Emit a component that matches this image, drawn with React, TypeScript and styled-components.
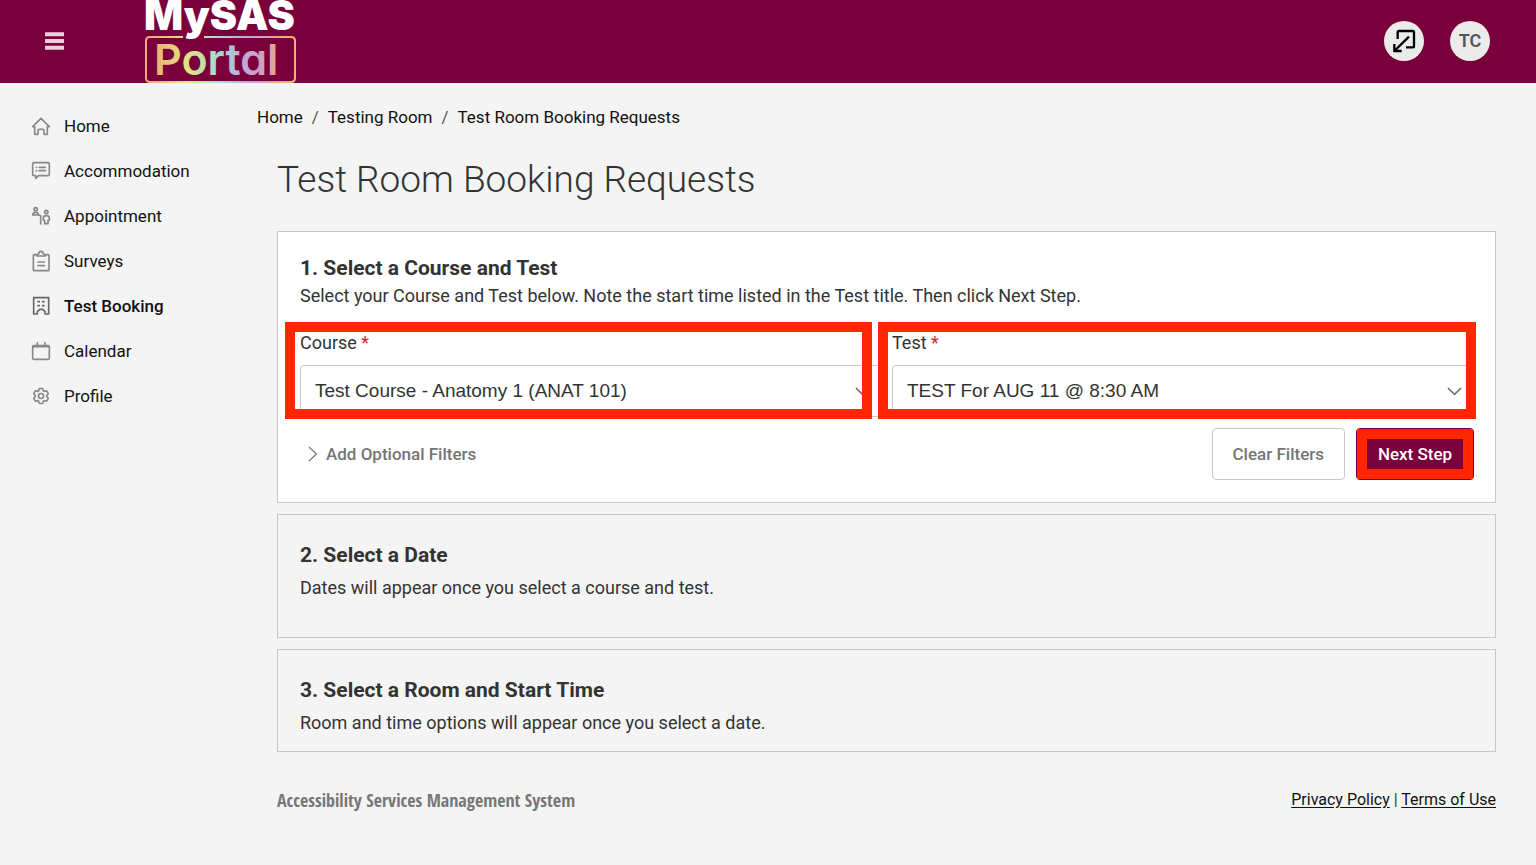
import React from 'react';
import styled, { createGlobalStyle } from 'styled-components';
import { HiOutlineCog6Tooth } from 'react-icons/hi2';

const GlobalStyle = createGlobalStyle`
  *, *::before, *::after { box-sizing: border-box; }
  body {
    margin: 0;
    background: #f4f4f4;
    color: #333;
    font-family: Roboto, "Liberation Sans", sans-serif;
    font-size: 17px;
    line-height: 24px;
  }
  h1, h2, p, ul, ol { margin: 0; padding: 0; }
  ul, ol { list-style: none; }
  button, select { font: inherit; cursor: pointer; }
`;

const Header = styled.header`
  display: flex;
  align-items: center;
  height: 83px;
  padding: 0 46px 0 45px;
  border-bottom: 1px solid #7a003c;
  background: #7a003c;
`;

const MenuButton = styled.button`
  display: flex;
  padding: 0;
  border: 0;
  background: none;
  margin-right: 80px;
`;

const LogoLink = styled.a`
  display: block;
  align-self: flex-start;
  height: 83px;
`;

const HeaderActions = styled.div`
  display: flex;
  gap: 26px;
  margin-left: auto;
`;

const RoundButton = styled.button`
  display: flex;
  align-items: center;
  justify-content: center;
  width: 40px;
  height: 40px;
  padding: 0;
  border: 0;
  border-radius: 50%;
  background: #ebebeb;
  color: #555;
  font-size: 18px;
  font-weight: 600;
`;

const Body = styled.div`
  display: flex;
`;

const Sidebar = styled.nav`
  flex: 0 0 257px;
  padding: 20px 0 0 31px;
`;

const NavLink = styled.a<{ $active?: boolean }>`
  display: flex;
  align-items: center;
  gap: 13px;
  height: 45px;
  color: #111;
  text-decoration: none;
  font-weight: ${(p) => (p.$active ? 500 : 400)};
  svg { color: ${(p) => (p.$active ? '#666' : '#888')}; flex: none; }
`;

const Main = styled.main`
  flex: 1;
  min-width: 0;
  padding: 22px 40px 40px 0;
`;

const Crumbs = styled.ol`
  display: flex;
  li + li::before { content: "/"; margin: 0 9px; color: #555; }
  a { color: #111; text-decoration: none; }
`;

const Content = styled.div`
  padding-left: 20px;
`;

const PageTitle = styled.h1`
  margin: 27px 0;
  font-size: 37px;
  line-height: 48px;
  font-weight: 300;
`;

const Steps = styled.div`
  display: flex;
  flex-direction: column;
  gap: 11px;
`;

const Card = styled.section<{ $open?: boolean; $bottom: number }>`
  padding: ${(p) => (p.$open ? 24 : 28)}px 21px ${(p) => p.$bottom}px 22px;
  border: 1px solid #c8c8c8;
  background: ${(p) => (p.$open ? '#fff' : 'transparent')};
  h2 { font-size: 21px; line-height: 24px; font-weight: 700; }
  p { font-size: 18px; }
  h2 + p { margin-top: ${(p) => (p.$open ? 4 : 9)}px; }
`;

const Fields = styled.div`
  display: grid;
  grid-template-columns: 1fr 1fr;
  gap: 10px;
  margin-top: 23px;
`;

const Field = styled.div`
  position: relative;
  min-width: 0;
  label { display: block; font-size: 18px; }
  label span { color: #c9302c; }
`;

const SelectWrap = styled.div`
  position: relative;
  margin-top: 10px;
  svg { position: absolute; right: 12px; top: 22px; pointer-events: none; }
`;

const Select = styled.select`
  display: block;
  appearance: none;
  width: 100%;
  height: 52px;
  padding: 0 40px 0 14px;
  border: 1px solid #c8c8c8;
  border-radius: 4px;
  background: #fff;
  color: #333;
  font-family: "Liberation Sans", Arial, sans-serif;
  font-size: 19px;
`;

const Highlight = styled.span<{ $left?: number; $right?: number; $top?: number; $bottom?: number }>`
  position: absolute;
  left: ${(p) => p.$left ?? 0}px;
  right: ${(p) => p.$right ?? 0}px;
  top: ${(p) => p.$top ?? 0}px;
  bottom: ${(p) => p.$bottom ?? 0}px;
  border: 10px solid #ff2600;
  pointer-events: none;
`;

const Actions = styled.div`
  display: flex;
  align-items: center;
  gap: 11px;
  margin-top: 11px;
`;

const FilterToggle = styled.button`
  display: flex;
  align-items: center;
  gap: 8px;
  margin-right: auto;
  padding: 0 0 0 8px;
  border: 0;
  background: none;
  color: #757575;
  font-weight: 500;
`;

const ActionButton = styled.button<{ $primary?: boolean }>`
  position: relative;
  min-width: 118px;
  height: 52px;
  padding: 0 20px;
  border: 1px solid ${(p) => (p.$primary ? '#7a003c' : '#c8c8c8')};
  border-radius: 4px;
  background: ${(p) => (p.$primary ? '#7a003c' : '#fff')};
  color: ${(p) => (p.$primary ? '#fff' : '#757575')};
  font-weight: 500;
`;

const Footer = styled.footer`
  display: flex;
  align-items: center;
  justify-content: space-between;
  margin-top: 36px;
  color: #333;
  font-size: 16px;
  a { color: #111; text-underline-offset: 2px; }
`;

const SystemName = styled.span`
  color: #777;
  font-family: "Liberation Sans Narrow", "Arial Narrow", "Open Sans Condensed", sans-serif;
  font-size: 18px;
`;

const Line = ({ children }: { children: React.ReactNode }) => (
  <svg width="20" height="20" viewBox="0 0 60 60" fill="none" stroke="currentColor" strokeWidth="5"
    strokeLinejoin="round" strokeLinecap="round" overflow="visible" aria-hidden="true">
    {children}
  </svg>
);

const HomeIcon = () => (
  <Line><path d="M30 7 5 32h6v23h10V43q0-3 3-3h12q3 0 3 3v12h10V32h6Z" /></Line>
);
const CommentIcon = () => (
  <Line>
    <path d="M9 5h42q4 0 4 4v31q0 4-4 4H23l-9 8v-8H9q-4 0-4-4V9q0-4 4-4Z" />
    <path d="M16 19h1M16 29h1M25 19h18M25 29h18" />
  </Line>
);
const PeopleIcon = () => (
  <Line>
    <circle cx="14" cy="10" r="5" />
    <path d="M5 27q0-8 9-8 7 0 9 8ZM23 27l6 2v25" />
    <circle cx="46" cy="18" r="5" />
    <path d="M41 53V43h-4v-7q0-7 9-7t9 7v7h-4v10Z" />
  </Line>
);
const ClipboardIcon = () => (
  <Line>
    <path d="M17 11h-7q-3 0-3 3v42q0 3 3 3h41q3 0 3-3V14q0-3-3-3h-7" />
    <path d="M17 15q0-6 6-6 1-8 7-8t7 8q6 0 6 6Z" />
    <path d="M21 33h19M21 44h19" />
  </Line>
);
const BuildingIcon = () => (
  <Line>
    <path d="M8 5h45v49H42v-7l-7-7h-9l-7 7v7H8Z" />
    <path d="M21 17h4M35 17h4M21 29h4M35 29h4" />
  </Line>
);
const CalendarIcon = () => (
  <Line>
    <path d="M8 14h44q3 0 3 3v35q0 3-3 3H8q-3 0-3-3V17q0-3 3-3ZM19 5v9M42 5v9" />
    <path d="M7 17h46" />
  </Line>
);

const ChevronDown = () => (
  <svg width="15" height="9" viewBox="0 0 15 9" fill="none" stroke="#666" strokeWidth="1.5" aria-hidden="true">
    <path d="M1 1l6.5 6.5L14 1" />
  </svg>
);

const Logo = () => (
  <svg width="152" height="83" viewBox="0 0 152 83" overflow="visible" aria-hidden="true">
    <defs>
      <linearGradient id="pastel" gradientUnits="userSpaceOnUse" x1="0" y1="0" x2="152" y2="0">
        <stop offset="0.04" stopColor="#f0aa74" />
        <stop offset="0.28" stopColor="#dfe680" />
        <stop offset="0.48" stopColor="#a0dcd4" />
        <stop offset="0.66" stopColor="#c0a8d8" />
        <stop offset="0.78" stopColor="#d0a0c0" />
        <stop offset="0.88" stopColor="#eca884" />
        <stop offset="1" stopColor="#eebb60" />
      </linearGradient>
    </defs>
    <path d="M38 37H5q-4 0-4 4v37q0 4 4 4h141q4 0 4-4V41q0-4-4-4H59" fill="none" stroke="url(#pastel)" strokeWidth="2" />
    <text x="-1" y="30" fill="#fff" fontFamily="Inter, sans-serif" fontWeight="900" fontSize="41">MySAS</text>
    <text x="9" y="75" fill="url(#pastel)" fontFamily="Inter, sans-serif" fontWeight="600" fontSize="43"
      style={{ fontFeatureSettings: '"cv11"' }}>Portal</text>
  </svg>
);

const navItems = [
  { label: 'Home', icon: <HomeIcon /> },
  { label: 'Accommodation', icon: <CommentIcon /> },
  { label: 'Appointment', icon: <PeopleIcon /> },
  { label: 'Surveys', icon: <ClipboardIcon /> },
  { label: 'Test Booking', icon: <BuildingIcon />, active: true },
  { label: 'Calendar', icon: <CalendarIcon /> },
  { label: 'Profile', icon: <HiOutlineCog6Tooth size={20} strokeWidth={2} aria-hidden="true" /> },
];

export default function App() {
  return (
    <>
      <GlobalStyle />
      <Header>
        <MenuButton type="button" aria-label="Menu">
          <svg width="20" height="18" viewBox="0 0 60 54" fill="#ebcfdc" aria-hidden="true">
            <path d="M0 1h57v12H0zM0 21h57v12H0zM0 41h57v12H0z" />
          </svg>
        </MenuButton>
        <LogoLink href="#home" aria-label="MySAS Portal"><Logo /></LogoLink>
        <HeaderActions>
          <RoundButton type="button" aria-label="Exit full view">
            <svg width="24" height="24" viewBox="0 0 72 72" fill="none" stroke="#000" strokeWidth="7" aria-hidden="true">
              <path d="M17 30V10q0-4 4-4h41q4 0 4 4v41q0 4-4 4H42M51 23 7 66M7 45v21h22" />
            </svg>
          </RoundButton>
          <RoundButton type="button">TC</RoundButton>
        </HeaderActions>
      </Header>
      <Body>
        <Sidebar aria-label="Main">
          <ul>
            {navItems.map((item) => (
              <li key={item.label}>
                <NavLink href="#" $active={item.active}>{item.icon}{item.label}</NavLink>
              </li>
            ))}
          </ul>
        </Sidebar>
        <Main>
          <Crumbs>
            <li><a href="#">Home</a></li>
            <li><a href="#">Testing Room</a></li>
            <li><a href="#">Test Room Booking Requests</a></li>
          </Crumbs>
          <Content>
            <PageTitle>Test Room Booking Requests</PageTitle>
            <Steps>
              <Card $open $bottom={22}>
                <h2>1. Select a Course and Test</h2>
                <p>Select your Course and Test below. Note the start time listed in the Test title. Then click Next Step.</p>
                <Fields>
                  <Field>
                    <label htmlFor="course">Course <span>*</span></label>
                    <SelectWrap>
                      <Select id="course"><option>Test Course - Anatomy 1 (ANAT 101)</option></Select>
                      <ChevronDown />
                    </SelectWrap>
                    <Highlight $left={-15} $right={10} $top={-9} $bottom={-2} />
                  </Field>
                  <Field>
                    <label htmlFor="test">Test <span>*</span></label>
                    <SelectWrap>
                      <Select id="test"><option>TEST For AUG 11 @ 8:30 AM</option></Select>
                      <ChevronDown />
                    </SelectWrap>
                    <Highlight $left={-14} $right={-2} $top={-9} $bottom={-2} />
                  </Field>
                </Fields>
                <Actions>
                  <FilterToggle type="button">
                    <svg width="10" height="16" viewBox="0 0 10 16" fill="none" stroke="#757575" strokeWidth="1.2" aria-hidden="true">
                      <path d="M1 1l7.5 7L1 15" />
                    </svg>
                    Add Optional Filters
                  </FilterToggle>
                  <ActionButton type="button">Clear Filters</ActionButton>
                  <ActionButton type="button" $primary>Next Step<Highlight /></ActionButton>
                </Actions>
              </Card>
              <Card $bottom={37}>
                <h2>2. Select a Date</h2>
                <p>Dates will appear once you select a course and test.</p>
              </Card>
              <Card $bottom={16}>
                <h2>3. Select a Room and Start Time</h2>
                <p>Room and time options will appear once you select a date.</p>
              </Card>
            </Steps>
            <Footer>
              <SystemName>Accessibility Services Management System</SystemName>
              <span><a href="#">Privacy Policy</a> | <a href="#">Terms of Use</a></span>
            </Footer>
          </Content>
        </Main>
      </Body>
    </>
  );
}
